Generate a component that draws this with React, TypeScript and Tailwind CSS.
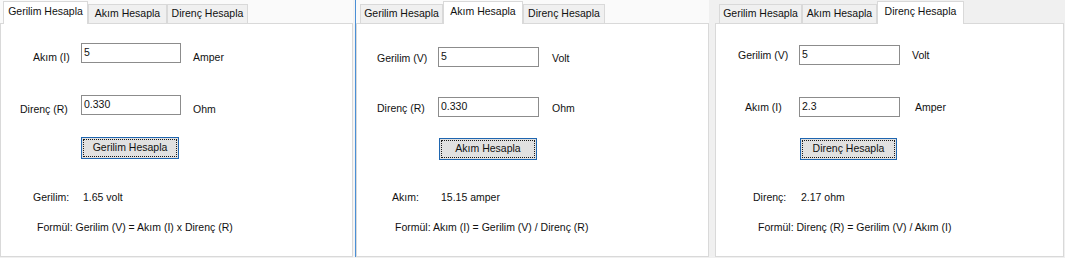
import React from "react";

type Tab = { text: string; w: string; active?: boolean };
type Row = { label: string; value: string; unit: string; pl: string; gap: string; unitMl: string };

type Panel = {
  key: string;
  outer: string;
  strip: string;
  tabs: Tab[];
  body: string;
  col: string;
  inputW: string;
  labelMt: string;
  rows: Row[];
  button: { text: string; cls: string };
  result: { label: string; value: string; cls: string; pl: string; w: string };
  formula: { text: string; cls: string };
};

const panels: Panel[] = [
  {
    key: "gerilim",
    outer: "w-[353px]",
    strip: "pl-[3px] bg-[#fafafa]",
    tabs: [
      { text: "Gerilim Hesapla", w: "w-[85px]", active: true },
      { text: "Akım Hesapla", w: "w-[79px]" },
      { text: "Direnç Hesapla", w: "w-[81px]" },
    ],
    body: "pt-[19px]",
    col: "w-[80px]",
    inputW: "w-[100px]",
    labelMt: "mt-[8px]",
    rows: [
      { label: "Akım (I)", value: "5", unit: "Amper", pl: "pl-[32px]", gap: "", unitMl: "ml-[12px]" },
      { label: "Direnç (R)", value: "0.330", unit: "Ohm", pl: "pl-[19px]", gap: "mt-[31px]", unitMl: "ml-[12px]" },
    ],
    button: { text: "Gerilim Hesapla", cls: "mt-[21px] ml-[80px] w-[98px]" },
    result: { label: "Gerilim:", value: "1.65 volt", cls: "mt-[32px]", pl: "pl-[32px]", w: "w-[82px]" },
    formula: { text: "Formül: Gerilim (V) = Akım (I) x Direnç (R)", cls: "mt-[17px] pl-[36px]" },
  },
  {
    key: "akim",
    outer: "w-[353px]",
    strip: "pl-[4px] bg-[#fafafa]",
    tabs: [
      { text: "Gerilim Hesapla", w: "w-[83px]" },
      { text: "Akım Hesapla", w: "w-[80px]", active: true },
      { text: "Direnç Hesapla", w: "w-[82px]" },
    ],
    body: "pt-[23px]",
    col: "w-[81px]",
    inputW: "w-[101px]",
    labelMt: "mt-[5px]",
    rows: [
      { label: "Gerilim (V)", value: "5", unit: "Volt", pl: "pl-[20px]", gap: "", unitMl: "ml-[13px]" },
      { label: "Direnç (R)", value: "0.330", unit: "Ohm", pl: "pl-[20px]", gap: "mt-[30px]", unitMl: "ml-[13px]" },
    ],
    button: { text: "Akım Hesapla", cls: "mt-[21px] ml-[82px] w-[98px]" },
    result: { label: "Akım:", value: "15.15 amper", cls: "mt-[31px]", pl: "pl-[35px]", w: "w-[84px]" },
    formula: { text: "Formül: Akım (I) = Gerilim (V) / Direnç (R)", cls: "mt-[17px] pl-[38px]" },
  },
  {
    key: "direnc",
    outer: "w-[349px]",
    strip: "pl-[4px] bg-[#f0f0f0]",
    tabs: [
      { text: "Gerilim Hesapla", w: "w-[83px]" },
      { text: "Akım Hesapla", w: "w-[75px]" },
      { text: "Direnç Hesapla", w: "w-[87px]", active: true },
    ],
    body: "pt-[21px]",
    col: "w-[83px]",
    inputW: "w-[101px]",
    labelMt: "mt-[4px]",
    rows: [
      { label: "Gerilim (V)", value: "5", unit: "Volt", pl: "pl-[22px]", gap: "", unitMl: "ml-[12px]" },
      { label: "Akım (I)", value: "2.3", unit: "Amper", pl: "pl-[29px]", gap: "mt-[32px]", unitMl: "ml-[15px]" },
    ],
    button: { text: "Direnç Hesapla", cls: "mt-[21px] ml-[84px] w-[97px]" },
    result: { label: "Direnç:", value: "2.17 ohm", cls: "mt-[31px]", pl: "pl-[37px]", w: "w-[85px]" },
    formula: { text: "Formül: Direnç (R) = Gerilim (V) / Akım (I)", cls: "mt-[17px] pl-[42px]" },
  },
];

const TabStrip: React.FC<{ panel: Panel }> = ({ panel }) => (
  <div className={`flex h-[23px] items-end ${panel.strip}`}>
    {panel.tabs.map((tab) =>
      tab.active ? (
        <div
          key={tab.text}
          className={`relative z-10 -mb-px flex h-[23px] items-center justify-center border border-b-0 border-[#d9d9d9] bg-white pb-[2px] ${tab.w}`}
        >
          {tab.text}
        </div>
      ) : (
        <div
          key={tab.text}
          className={`flex h-[19px] items-center justify-center border border-b-0 border-[#d9d9d9] bg-[#f0f0f0] ${tab.w}`}
        >
          {tab.text}
        </div>
      )
    )}
  </div>
);

const CalcPanel: React.FC<{ panel: Panel }> = ({ panel }) => (
  <div className={`flex h-[257px] flex-col ${panel.outer}`}>
    <TabStrip panel={panel} />
    <div className={`flex-1 border border-[#d9d9d9] bg-white ${panel.body}`}>
      {panel.rows.map((row) => (
        <div key={row.label} className={`flex items-start ${row.gap}`}>
          <div className={`${panel.col} ${row.pl} ${panel.labelMt} leading-[13px]`}>{row.label}</div>
          <div className={`h-[20px] border border-[#8c8c8c] bg-white pl-[2px] pt-[2px] leading-[13px] ${panel.inputW}`}>
            {row.value}
          </div>
          <div className={`${row.unitMl} ${panel.labelMt} leading-[13px]`}>{row.unit}</div>
        </div>
      ))}

      <button
        className={`flex h-[22px] items-center justify-center border border-[#1f66b0] bg-[#e1e1e1] outline-1 outline-dotted outline-offset-[-3px] outline-[#1a1a1a] ${panel.button.cls}`}
      >
        {panel.button.text}
      </button>

      <div className={`flex leading-[13px] ${panel.result.cls}`}>
        <div className={`${panel.result.w} ${panel.result.pl}`}>{panel.result.label}</div>
        <div>{panel.result.value}</div>
      </div>

      <div className={`leading-[13px] ${panel.formula.cls}`}>{panel.formula.text}</div>
    </div>
  </div>
);

export default function App() {
  return (
    <div className="flex h-[258px] w-[1065px] bg-[#f0f0f0] font-['Liberation_Sans',Arial,sans-serif] text-[10.5px] text-[#111]">
      <CalcPanel panel={panels[0]} />
      <div className="w-[2px] bg-[#f4f4f4]" />
      <div className="h-[257px] w-px bg-[#4a8fd6]" />
      <CalcPanel panel={panels[1]} />
      <div className="w-[6px] bg-[#f0f0f0]" />
      <CalcPanel panel={panels[2]} />
    </div>
  );
}
